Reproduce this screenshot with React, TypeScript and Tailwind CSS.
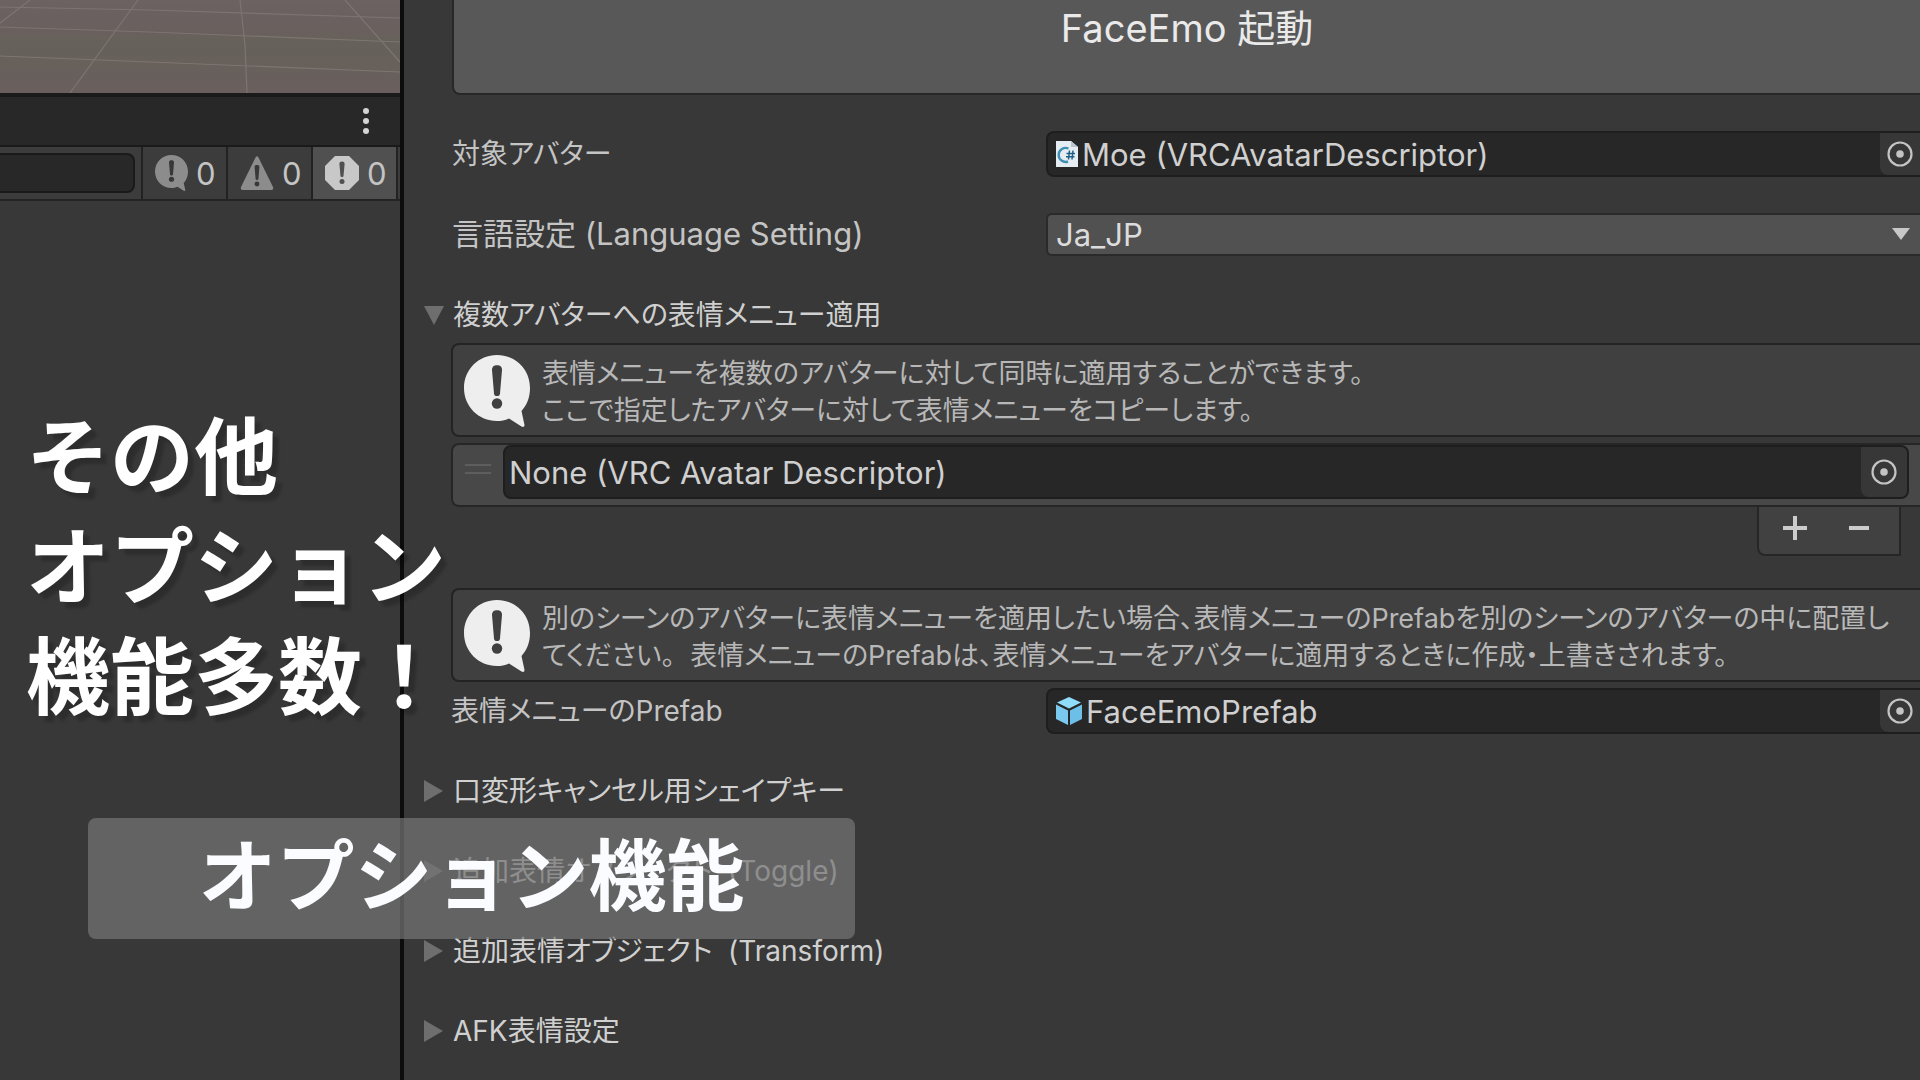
import { useState } from 'react'
import type { FC, ReactNode } from 'react'
import { clsx } from 'clsx'

interface ConsoleToggleProps {
    label: string
    count: number
    active?: boolean
    icon: ReactNode
}

interface ObjectFieldProps {
    id: string
    value: string
    label?: string
    icon?: ReactNode
    inList?: boolean
}

interface HelpBoxProps {
    lines: string[]
}

interface FoldoutProps {
    title: string
    defaultOpen?: boolean
}

const BubbleIcon: FC<{ className: string; mark: string }> = ({ className, mark }) => (
    <svg
        viewBox="0 0 66 72"
        className={className}
        aria-hidden="true">
        <path
            fill="currentColor"
            d="M33 0C51.500 0 66 14.500 66 33C66 43 62.500 50.500 57.500 56L60.500 70C60.500 72 59 72.500 57.500 71.500L45 63.500C41 65.500 37 66 33 66C14.500 66 0 51.500 0 33S14.500 0 33 0Z"
        />
        <path
            fill={mark}
            d="M28 15C28 11.500 30 10.300 33 10.300S38 11.500 38 15L36 38.500C35.800 40.500 34.800 41 33 41S30.200 40.500 30 38.500Z"
        />
        <circle
            cx="33"
            cy="48.500"
            r="5.200"
            fill={mark}
        />
    </svg>
)

const WarningIcon = () => (
    <svg
        viewBox="0 0 34 34"
        className="size-[34px]"
        aria-hidden="true">
        <path
            fill="#8c8c8c"
            d="M17 0L18.500 1.500L33 31C33.600 33 33 34 31.500 34H2.500C1 34 .4 33 1 31L15.500 1.500Z"
        />
        <path
            fill="#383838"
            d="M14.600 11C14.600 9.500 15.500 9 17 9S19.400 9.500 19.400 11L18.400 23C18.200 24.300 15.800 24.300 15.600 23Z"
        />
        <circle
            cx="17"
            cy="28"
            r="2.400"
            fill="#383838"
        />
    </svg>
)

const ErrorIcon = () => (
    <svg
        viewBox="0 0 34 34"
        className="size-[34px]"
        aria-hidden="true">
        <path
            fill="#c8c8c8"
            d="M10 0H24L34 10V24L24 34H10L0 24V10Z"
        />
        <path
            fill="#505050"
            d="M14.400 8C14.400 6.200 15.500 5.500 17 5.500S19.600 6.200 19.600 8L18.500 20C18.300 21.400 15.700 21.400 15.500 20Z"
        />
        <circle
            cx="17"
            cy="25.500"
            r="2.500"
            fill="#505050"
        />
    </svg>
)

const ScriptIcon = () => (
    <svg
        viewBox="0 0 22 26"
        className="h-[26px] w-[22px] shrink-0"
        aria-hidden="true">
        <path
            fill="#e6edf2"
            d="M0 0H15L22 6V26H0Z"
        />
        <path
            fill="#b9c6cf"
            d="M15 0L22 6H15Z"
        />
        <path
            fill="none"
            stroke="#3f8fb5"
            strokeWidth="2.400"
            d="M12.500 7.500A7 7 0 1 0 12 20.500"
        />
        <path
            fill="none"
            stroke="#1f5f86"
            strokeWidth="1.500"
            d="M13.500 9.500L12.500 18.500M17 9.500L16 18.500M10.500 12.500H19M10 15.800H18.500"
        />
    </svg>
)

const PrefabIcon = () => (
    <svg
        viewBox="0 0 26 28"
        className="h-[28px] w-[26px] shrink-0"
        aria-hidden="true">
        <path
            fill="#8fdcfb"
            d="M13 0L25 5.500L13 11.500L1 5.500Z"
        />
        <path
            fill="#7ac9ee"
            d="M0 7.500L12 13.500V28L0 22Z"
        />
        <path
            fill="#6cc0e8"
            d="M26 7.500L14 13.500V28L26 22Z"
        />
    </svg>
)

const PickerIcon = () => (
    <svg
        viewBox="0 0 26 26"
        className="size-[26px]"
        aria-hidden="true">
        <circle
            cx="13"
            cy="13"
            r="11.500"
            fill="none"
            stroke="#c4c4c4"
            strokeWidth="2.200"
        />
        <circle
            cx="13"
            cy="13"
            r="3.800"
            fill="#c4c4c4"
        />
    </svg>
)

const SceneView = () => (
    <svg
        viewBox="0 0 400 93"
        preserveAspectRatio="none"
        className="h-[93px] w-full shrink-0"
        aria-label="Scene">
        <defs>
            <linearGradient
                id="ground"
                x1="0"
                y1="0"
                x2="0"
                y2="1">
                <stop
                    offset="0"
                    stopColor="#6b6261"
                />
                <stop
                    offset=".32"
                    stopColor="#6a605e"
                />
                <stop
                    offset=".45"
                    stopColor="#66615a"
                />
                <stop
                    offset=".7"
                    stopColor="#67605b"
                />
                <stop
                    offset="1"
                    stopColor="#6a5f5e"
                />
            </linearGradient>
        </defs>
        <rect
            width="400"
            height="93"
            fill="url(#ground)"
        />
        <g
            fill="none"
            stroke="#7d7571"
            strokeWidth="1.200">
            <path d="M0 7L150 10L400 18" />
            <path d="M0 27L150 32L400 42" />
            <path d="M0 56L150 62L400 72" />
            <path d="M30 0L0 23" />
            <path d="M138 0L70 93" />
            <path d="M240 0L245 45L247 93" />
            <path d="M345 0L400 62" />
        </g>
    </svg>
)

const ConsoleToggle: FC<ConsoleToggleProps> = ({ label, count, active, icon }) => (
    <button
        type="button"
        aria-label={label}
        aria-pressed={active}
        className={clsx(
            'flex w-[85px] items-center gap-2 border-l-2 border-[#222222] pl-3 text-[31px] leading-none text-[#c4c4c4]',
            active ? 'bg-[#505050]' : 'bg-[#3c3c3c]'
        )}>
        {icon}
        <span>{count}</span>
    </button>
)

const ObjectField: FC<ObjectFieldProps> = ({ id, value, label, icon, inList }) => (
    <div
        className={clsx(
            'flex min-w-0 items-stretch overflow-hidden border-2 border-[#1e1e1e] bg-[#272727]',
            inList ? 'h-[54px] flex-1 rounded-lg pl-1' : 'h-[46px] rounded-l-lg border-r-0 pl-2'
        )}>
        <div className="flex min-w-0 flex-1 items-center gap-1">
            {icon}
            <input
                id={id}
                aria-label={label}
                readOnly
                value={value}
                className="w-full min-w-0 bg-transparent pt-0.5 text-[31px] text-[#d0d0d0] outline-none"
            />
        </div>
        <button
            type="button"
            aria-label="Select object"
            className={clsx('flex items-center justify-center rounded-bl-lg bg-[#373737]', inList ? 'w-[46px]' : 'w-10')}>
            <PickerIcon />
        </button>
    </div>
)

const HelpBox: FC<HelpBoxProps> = ({ lines }) => (
    <div className="flex h-[94px] items-start rounded-l-lg border-2 border-r-0 border-[#232323] bg-[#404040] pl-[11px]">
        <BubbleIcon
            className="mt-2.5 h-[72px] w-[66px] shrink-0 text-[#eeeeee]"
            mark="#404040"
        />
        <div className="ml-3 pt-2.5 text-[27px] leading-[37px] whitespace-pre text-[#b8b8b8]">
            {lines.map(line => (
                <p key={line}>{line}</p>
            ))}
        </div>
    </div>
)

const Foldout: FC<FoldoutProps> = ({ title, defaultOpen = false }) => {
    const [open, setOpen] = useState(defaultOpen)

    return (
        <button
            type="button"
            aria-expanded={open}
            onClick={() => setOpen(!open)}
            className="flex h-20 w-full items-center gap-2 pt-0.5 pl-[19px] text-left text-[28px] whitespace-pre text-[#d0d0d0]">
            <svg
                viewBox="0 0 22 22"
                className="size-[22px]"
                aria-hidden="true">
                <path
                    fill="#6e6e6e"
                    d={open ? 'M1 2H21L11 21Z' : 'M1 0L20 11L1 22Z'}
                />
            </svg>
            {title}
        </button>
    )
}

const ConsolePanel = () => (
    <aside className="flex w-[404px] shrink-0 flex-col border-r-4 border-[#0c0c0c]">
        <SceneView />
        <div className="flex h-[54px] items-center justify-end border-t-4 border-b-2 border-[#1a1a1a] bg-[#282828] pr-[31px]">
            <button
                type="button"
                aria-label="Menu"
                className="flex flex-col gap-1">
                <span className="size-1.5 rounded-full bg-[#d4d4d4]" />
                <span className="size-1.5 rounded-full bg-[#d4d4d4]" />
                <span className="size-1.5 rounded-full bg-[#d4d4d4]" />
            </button>
        </div>
        <div className="flex h-[54px] border-b-2 border-[#232323] bg-[#3c3c3c]">
            <div className="flex flex-1 items-center pr-1.5">
                <input
                    type="text"
                    aria-label="Search"
                    className="h-10 w-full min-w-0 rounded-r-lg border-2 border-l-0 border-[#1a1a1a] bg-[#282828] px-2 text-[28px] text-[#d0d0d0] outline-none"
                />
            </div>
            <ConsoleToggle
                label="Messages"
                count={0}
                icon={
                    <BubbleIcon
                        className="h-[36px] w-[33px] text-[#8c8c8c]"
                        mark="#383838"
                    />
                }
            />
            <ConsoleToggle
                label="Warnings"
                count={0}
                icon={<WarningIcon />}
            />
            <ConsoleToggle
                label="Errors"
                count={0}
                active
                icon={<ErrorIcon />}
            />
            <div className="w-1 border-l-2 border-[#222222]" />
        </div>
    </aside>
)

const Inspector = () => (
    <main className="min-w-0 flex-1">
        <div className="pl-12">
            <button
                type="button"
                className="mb-[19px] flex h-[95px] w-full items-start justify-center rounded-bl-lg border-b-2 border-l-2 border-[#282828] bg-[#585858] text-[38px] leading-[56px] text-[#eaeaea]">
                FaceEmo 起動
            </button>
            <div className="grid h-20 grid-cols-[594px_1fr] items-center">
                <label
                    htmlFor="avatar"
                    className="text-[28px] text-[#c4c4c4]">
                    対象アバター
                </label>
                <ObjectField
                    id="avatar"
                    value="Moe (VRCAvatarDescriptor)"
                    icon={<ScriptIcon />}
                />
            </div>
            <div className="grid h-20 grid-cols-[594px_1fr] items-center">
                <label
                    htmlFor="language"
                    className="text-[31px] text-[#c4c4c4]">
                    言語設定 (Language Setting)
                </label>
                <div className="grid items-center">
                    <select
                        id="language"
                        className="col-start-1 row-start-1 h-[43px] appearance-none rounded-l-md border-2 border-r-0 border-[#2a2a2a] bg-[#515151] pl-2 text-[31px] leading-none text-[#dcdcdc]">
                        <option>Ja_JP</option>
                        <option>En_US</option>
                    </select>
                    <svg
                        viewBox="0 0 18 12"
                        className="pointer-events-none col-start-1 row-start-1 mr-2.5 h-3 w-[18px] justify-self-end"
                        aria-hidden="true">
                        <path
                            fill="#c8c8c8"
                            d="M0 0H18L9 12Z"
                        />
                    </svg>
                </div>
            </div>
        </div>

        <Foldout
            title="複数アバターへの表情メニュー適用"
            defaultOpen
        />
        <div className="-mt-[11px] pl-[47px]">
            <HelpBox lines={['表情メニューを複数のアバターに対して同時に適用することができます。', 'ここで指定したアバターに対して表情メニューをコピーします。']} />
            <div className="mt-1.5 flex h-[64px] items-start rounded-l-lg border-2 border-r-0 border-[#262626] bg-[#484848]">
                <div className="flex h-full w-[50px] flex-col items-center justify-center gap-1.5 pb-3">
                    <span className="h-0.5 w-[26px] bg-[#5e5e5e]" />
                    <span className="h-0.5 w-[26px] bg-[#5e5e5e]" />
                </div>
                <ObjectField
                    id="extra-avatar"
                    label="Avatar 1"
                    value="None (VRC Avatar Descriptor)"
                    inList
                />
                <div className="w-[11px]" />
            </div>
            <div className="mr-[19px] flex justify-end">
                <div className="flex h-[49px] w-[144px] items-start justify-center gap-10 rounded-bl-lg border-2 border-t-0 border-[#262626] bg-[#414141] pt-2 pr-1.5">
                    <button
                        type="button"
                        aria-label="Add">
                        <svg
                            viewBox="0 0 26 26"
                            className="size-[26px]">
                            <path
                                stroke="#cccccc"
                                strokeWidth="4"
                                d="M1 13H25M13 1V25"
                            />
                        </svg>
                    </button>
                    <button
                        type="button"
                        aria-label="Remove">
                        <svg
                            viewBox="0 0 22 26"
                            className="h-[26px] w-[22px]">
                            <path
                                stroke="#cccccc"
                                strokeWidth="4"
                                d="M1 13H21"
                            />
                        </svg>
                    </button>
                </div>
            </div>
            <div className="mt-8">
                <HelpBox
                    lines={[
                        '別のシーンのアバターに表情メニューを適用したい場合、表情メニューのPrefabを別のシーンのアバターの中に配置し',
                        'てください。  表情メニューのPrefabは、表情メニューをアバターに適用するときに作成・上書きされます。',
                    ]}
                />
            </div>
            <div className="mt-1.5 mb-4 grid grid-cols-[595px_1fr] items-center">
                <label
                    htmlFor="prefab"
                    className="text-[28px] text-[#c4c4c4]">
                    表情メニューのPrefab
                </label>
                <ObjectField
                    id="prefab"
                    value="FaceEmoPrefab"
                    icon={<PrefabIcon />}
                />
            </div>
        </div>
        <Foldout title="口変形キャンセル用シェイプキー" />
        <Foldout title="追加表情オブジェクト  (Toggle)" />
        <Foldout title="追加表情オブジェクト  (Transform)" />
        <Foldout title="AFK表情設定" />
    </main>
)

const App = () => {
    return (
        <div className="relative flex min-h-screen overflow-hidden bg-[#383838] font-['Inter','Noto_Sans_CJK_JP',sans-serif] [font-feature-settings:'palt']">
            <ConsolePanel />
            <Inspector />

            {/* Captions laid over the editor */}
            <h1 className="absolute top-[397px] left-[26px] font-['Noto_Sans_CJK_JP',sans-serif] text-[84px] leading-[110px] font-bold whitespace-nowrap text-white [font-feature-settings:normal] [text-shadow:6px_6px_3px_rgba(0,0,0,0.2)]">
                その他
                <br />
                オプション
                <br />
                機能多数！
            </h1>
            <div className="absolute top-[818px] left-[88px] flex h-[121px] w-[767px] items-center justify-center rounded-lg bg-[#757575]/72 pb-4">
                <h2 className="font-['Noto_Sans_CJK_JP',sans-serif] text-[78px] leading-none font-bold text-[#fbfcff] [font-feature-settings:normal]">オプション機能</h2>
            </div>
        </div>
    )
}

export default App
